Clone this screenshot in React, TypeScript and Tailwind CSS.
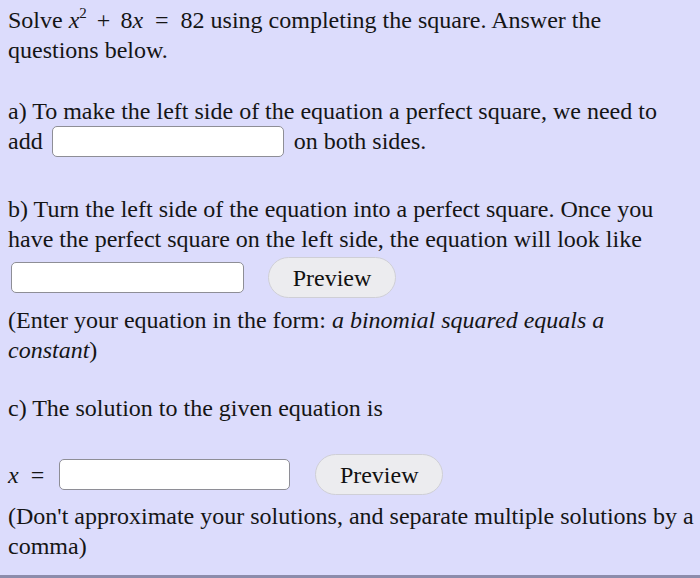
import React from 'react';

const serif = { fontFamily: '"Liberation Serif", "Times New Roman", serif' };

const MathX: React.FC = () => <i style={serif}>x</i>;

const AnswerBox: React.FC<{ className?: string }> = ({ className }) => (
  <input
    type="text"
    className={`h-[31px] rounded-[5px] border border-[#8e8e96] bg-white outline-none ${className ?? ''}`}
  />
);

const PreviewButton: React.FC = () => (
  <button className="h-[41px] w-[128px] rounded-full border border-[#cfcfd6] bg-[#ececef] text-[24px] text-[#111]" style={serif}>
    Preview
  </button>
);

const App: React.FC = () => {
  return (
    <div className="h-[578px] w-[700px] overflow-hidden bg-[#dcdcfc] border-b-[3px] border-[#8c8cab]">
      <div className="px-[8px] pt-[5px] text-[24px] leading-[30px] text-[#151515]" style={serif}>
        <p className="whitespace-nowrap">
          Solve <MathX /><sup className="text-[15px] relative -top-[10px]">2</sup>
          <span className="mx-[10px]">+</span>8<MathX />
          <span className="mx-[12px]">=</span>82 using completing the square. Answer the
        </p>
        <p>questions below.</p>

        <p className="mt-[31px] whitespace-nowrap">a) To make the left side of the equation a perfect square, we need to</p>
        <div className="flex items-center h-[30px]">
          <span>add</span>
          <AnswerBox className="ml-[9px] w-[232px]" />
          <span className="ml-[10px]">on both sides.</span>
        </div>

        <p className="mt-[38px] whitespace-nowrap">b) Turn the left side of the equation into a perfect square. Once you</p>
        <p className="whitespace-nowrap">have the perfect square on the left side, the equation will look like</p>
        <div className="mt-[3px] flex items-center h-[41px]">
          <AnswerBox className="ml-[3px] w-[233px]" />
          <div className="ml-[24px]"><PreviewButton /></div>
        </div>

        <p className="mt-[7px] whitespace-nowrap">
          (Enter your equation in the form: <i>a binomial squared equals a</i>
        </p>
        <p><i>constant</i>)</p>

        <p className="mt-[28px]">c) The solution to the given equation is</p>
        <div className="mt-[31px] flex items-center h-[41px]">
          <MathX />
          <span className="ml-[12px]">=</span>
          <AnswerBox className="ml-[15px] w-[231px]" />
          <div className="ml-[25px]"><PreviewButton /></div>
        </div>

        <p className="mt-[6px] whitespace-nowrap">(Don't approximate your solutions, and separate multiple solutions by a</p>
        <p>comma)</p>
      </div>
    </div>
  );
};

export default App;
